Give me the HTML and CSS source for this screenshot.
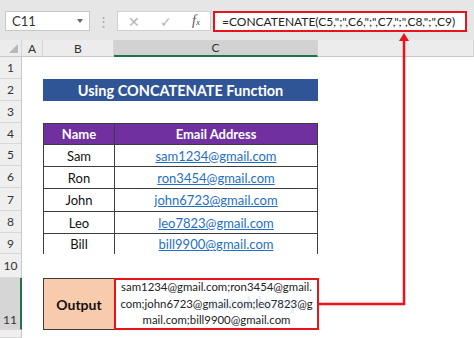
FILE: index.html
```html
<!DOCTYPE html>
<html lang="en">
<head>
    <meta charset="UTF-8">
    <title>CONCATENATE</title>
    <link rel="stylesheet" href="styles.css">
</head>
<body>

    <!-- Formula bar -->
    <div class="toolbar">
        <div class="namebox">
            <span>C11</span>
            <span class="drop"></span>
        </div>
        <div class="dots">&#8942;</div>
        <div class="buttons">
            <span class="btn">&#10005;</span>
            <span class="btn">&#10003;</span>
            <span class="btn fx"><i>f</i><small>x</small></span>
        </div>
        <div class="formula">=CONCATENATE(C5,";",C6,";",C7,";",C8,";",C9)</div>
    </div>

    <!-- Sheet -->
    <div class="sheet">
        <div class="colhead corner"><span class="tri"></span></div>
        <div class="colhead">A</div>
        <div class="colhead">B</div>
        <div class="colhead selected">C</div>
        <div class="colhead"></div>

        <div class="rowhead r1">1</div>
        <div class="rowhead r2">2</div>
        <div class="rowhead r3">3</div>
        <div class="rowhead r4">4</div>
        <div class="rowhead r5">5</div>
        <div class="rowhead r6">6</div>
        <div class="rowhead r7">7</div>
        <div class="rowhead r8">8</div>
        <div class="rowhead r9">9</div>
        <div class="rowhead r10">10</div>
        <div class="rowhead r11 active">11</div>
        <div class="rowhead r12"></div>

        <div class="title">Using CONCATENATE Function</div>

        <div class="data">
            <div class="th">Name</div>
            <div class="th">Email Address</div>
            <div class="td">Sam</div>
            <div class="td"><a href="#">sam1234@gmail.com</a></div>
            <div class="td">Ron</div>
            <div class="td"><a href="#">ron3454@gmail.com</a></div>
            <div class="td">John</div>
            <div class="td"><a href="#">john6723@gmail.com</a></div>
            <div class="td">Leo</div>
            <div class="td"><a href="#">leo7823@gmail.com</a></div>
            <div class="td">Bill</div>
            <div class="td"><a href="#">bill9900@gmail.com</a></div>
        </div>

        <div class="output-label">Output</div>
        <div class="output">
            <span>sam1234@gmail.com;ron3454@gmail.</span>
            <span>com;john6723@gmail.com;leo7823@g</span>
            <span>mail.com;bill9900@gmail.com</span>
            <span class="mark">exceldemy</span>
        </div>
    </div>

    <!-- Arrow from formula to output -->
    <svg class="arrow" width="474" height="338" viewBox="0 0 474 338">
        <polyline points="404,40 404,304 319,304" fill="none" stroke="#e8141b" stroke-width="2.5"/>
        <polygon points="404,33 399,41 409,41" fill="#e8141b"/>
    </svg>

</body>
</html>
```

FILE: styles.css
```css
body {
    margin: 0;
    width: 474px;
    height: 338px;
    overflow: hidden;
    background: white;
    font-family: Lato, 'Open Sans', sans-serif;
    position: relative;
}
.toolbar {
    height: 40px;
    background: #e6e6e6;
    display: flex;
    align-items: center;
    padding: 2px 0 0 5px;
    box-sizing: border-box;
}
.namebox {
    width: 85px;
    height: 20px;
    background: white;
    border: 1px solid #c8c8c8;
    box-sizing: border-box;
    display: flex;
    align-items: center;
    justify-content: space-between;
    padding: 0 6px 0 6px;
    font-size: 13px;
    color: #333;
}
.drop {
    width: 0;
    height: 0;
    border-left: 3px solid transparent;
    border-right: 3px solid transparent;
    border-top: 4px solid #666;
}
.dots {
    width: 27px;
    text-align: center;
    color: #aaa;
    font-size: 13px;
}
.buttons {
    width: 94px;
    height: 20px;
    background: white;
    border: 1px solid #d0d0d0;
    box-sizing: border-box;
    display: flex;
    align-items: center;
    justify-content: space-around;
    color: #b4b4b4;
    font-size: 14px;
    margin-right: 2px;
}
.fx {
    color: #555;
    font-family: 'Liberation Serif', serif;
    font-size: 14px;
}
.fx small {
    font-size: 9px;
    font-style: italic;
}
.formula {
    width: 254px;
    height: 21px;
    background: white;
    border: 2px solid #e8141b;
    box-sizing: border-box;
    font-size: 12px;
    color: #222;
    display: flex;
    align-items: center;
    padding-left: 7px;
    white-space: nowrap;
}
.sheet {
    display: grid;
    grid-template-columns: 22px 21px 71px 204px 1fr;
    grid-template-rows: 17px 22px 22px 22px 21px 22px 22px 23px 22px 21px 24px 52px 1fr;
    height: 298px;
}
.colhead {
    background: #ececec;
    border-right: 1px solid #d4d4d4;
    border-bottom: 1px solid #c8c8c8;
    font-size: 12px;
    color: #333;
    display: flex;
    align-items: center;
    justify-content: center;
}
.colhead.selected {
    background: #d2d2d2;
    border-bottom: 2px solid #217346;
}
.corner {
    position: relative;
}
.tri {
    position: absolute;
    right: 3px;
    bottom: 3px;
    width: 0;
    height: 0;
    border-left: 9px solid transparent;
    border-bottom: 9px solid #b7b7b7;
}
.rowhead {
    grid-column: 1;
    background: #efefef;
    border-bottom: 1px solid #d8d8d8;
    border-right: 1px solid #c8c8c8;
    font-size: 12px;
    color: #333;
    display: flex;
    align-items: center;
    justify-content: center;
}
.rowhead.active {
    background: #d6d6d6;
    border-right: 2px solid #217346;
    align-items: flex-end;
    padding-bottom: 2px;
}
.r1 { grid-row: 2; }
.r2 { grid-row: 3; }
.r3 { grid-row: 4; }
.r4 { grid-row: 5; }
.r5 { grid-row: 6; }
.r6 { grid-row: 7; }
.r7 { grid-row: 8; }
.r8 { grid-row: 9; }
.r9 { grid-row: 10; }
.r10 { grid-row: 11; }
.r11 { grid-row: 12; }
.r12 { grid-row: 13; }
.title {
    grid-row: 3;
    grid-column: 3 / 5;
    background: #2f5597;
    color: white;
    font-weight: bold;
    font-size: 14.5px;
    display: flex;
    align-items: center;
    justify-content: center;
}
.data {
    grid-row: 5 / 11;
    grid-column: 3 / 5;
    display: grid;
    grid-template-columns: 70px 1fr;
    grid-template-rows: 20px 21px 21px 22px 21px 20px;
    gap: 1px;
    padding: 1px;
    background: #3c3c3c;
}
.th {
    background: #7030a0;
    color: white;
    font-weight: bold;
    font-size: 13px;
    display: flex;
    align-items: center;
    justify-content: center;
}
.td {
    background: white;
    color: #111;
    font-size: 13px;
    display: flex;
    align-items: center;
    justify-content: center;
}
.td a {
    color: #1f6fc5;
}
.output-label {
    grid-row: 12;
    grid-column: 3;
    background: #f8cbad;
    border: 1px solid #3c3c3c;
    border-right: none;
    font-weight: bold;
    font-size: 14px;
    color: #111;
    display: flex;
    align-items: center;
    justify-content: center;
}
.output {
    grid-row: 12;
    grid-column: 4;
    border: 2.5px solid #e8141b;
    margin-right: -1px;
    font-size: 11.4px;
    color: #222;
    display: flex;
    flex-direction: column;
    align-items: center;
    justify-content: center;
    line-height: 16.5px;
    white-space: nowrap;
    position: relative;
}
.mark {
    position: absolute;
    left: 92px;
    top: 15px;
    font-size: 19px;
    font-weight: bold;
    color: #6e8fd0;
    opacity: 0.16;
}
.arrow {
    position: absolute;
    left: 0;
    top: 0;
    pointer-events: none;
}
```
